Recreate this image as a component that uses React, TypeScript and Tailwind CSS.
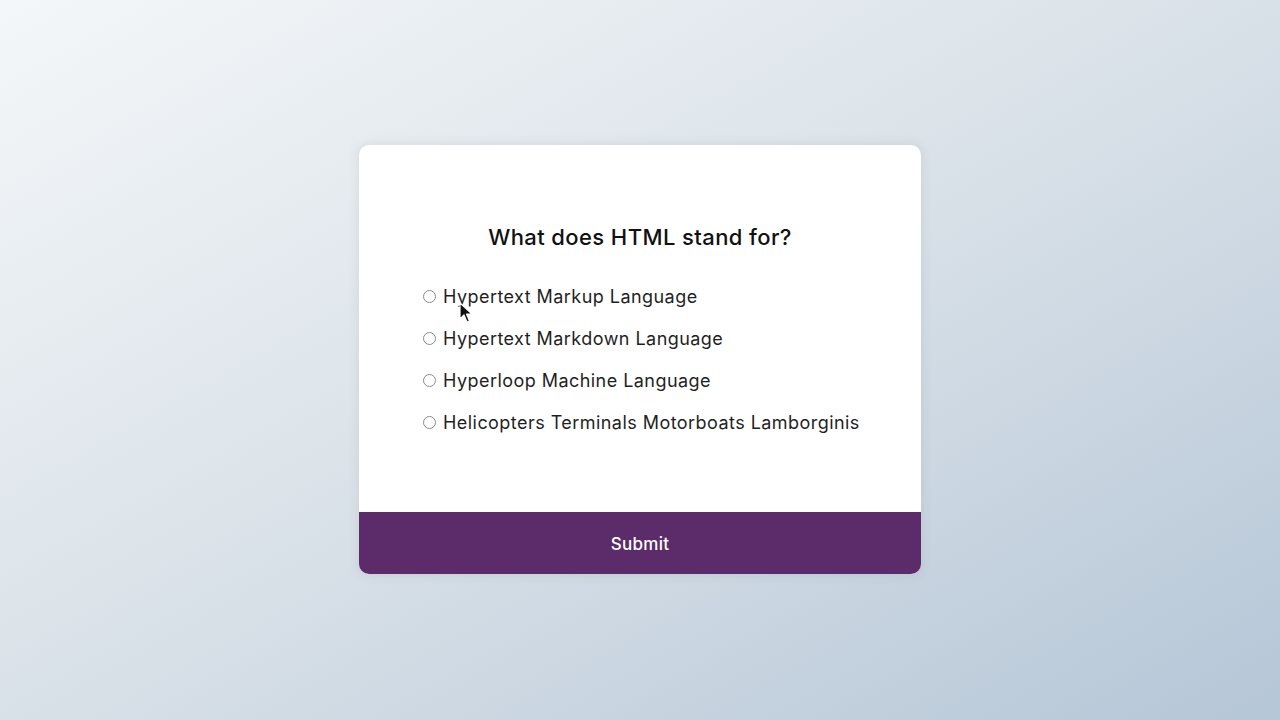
import { useState } from "react";

const answers = [
  "Hypertext Markup Language",
  "Hypertext Markdown Language",
  "Hyperloop Machine Language",
  "Helicopters Terminals Motorboats Lamborginis",
];

const Cursor = () => (
  <svg
    className="pointer-events-none absolute left-[459px] top-[302px]"
    width="14"
    height="22"
    viewBox="0 0 14 22"
  >
    <path
      d="M1 1 L1 17 L5 13 L8 20 L10.5 19 L7.5 12 L13 12 Z"
      fill="#111"
      stroke="#fff"
      strokeWidth="1.2"
      strokeLinejoin="round"
    />
  </svg>
);

export default function App() {
  const [picked, setPicked] = useState<number | null>(null);

  return (
    <div className="relative flex h-[720px] w-full items-start justify-center bg-linear-to-br from-[#f4f7f9] via-[#d9e1e8] to-[#b5c6d7] pt-[145px] font-['Inter','Noto_Sans',sans-serif]">
      <div className="w-[562px] overflow-hidden rounded-[10px] bg-white shadow-[0_0_10px_2px_rgba(100,100,100,0.1)]">
        <div className="px-16 pt-[79px] pb-[69px]">
          <h2 className="text-center text-[22px] leading-[26px] font-medium tracking-[0.4px] text-[#111]">
            What does HTML stand for?
          </h2>
          <ul className="mt-[25px]">
            {answers.map((a, i) => (
              <li key={a} className="flex h-[42px] items-center">
                <label className="flex cursor-pointer items-center gap-[7px] whitespace-nowrap text-[18px] tracking-[0.45px] text-[#1f1f1f]">
                  <span
                    onClick={() => setPicked(i)}
                    className="flex h-[13px] w-[13px] shrink-0 items-center justify-center rounded-full border border-[#8a8a8a]"
                  >
                    {picked === i && (
                      <span className="h-[7px] w-[7px] rounded-full bg-[#5d2b6b]" />
                    )}
                  </span>
                  {a}
                </label>
              </li>
            ))}
          </ul>
        </div>
        <button className="block h-[62px] w-full bg-[#5c2b6a] pt-[3px] text-[17px] font-medium tracking-[0.3px] text-white">
          Submit
        </button>
      </div>
      <Cursor />
    </div>
  );
}
